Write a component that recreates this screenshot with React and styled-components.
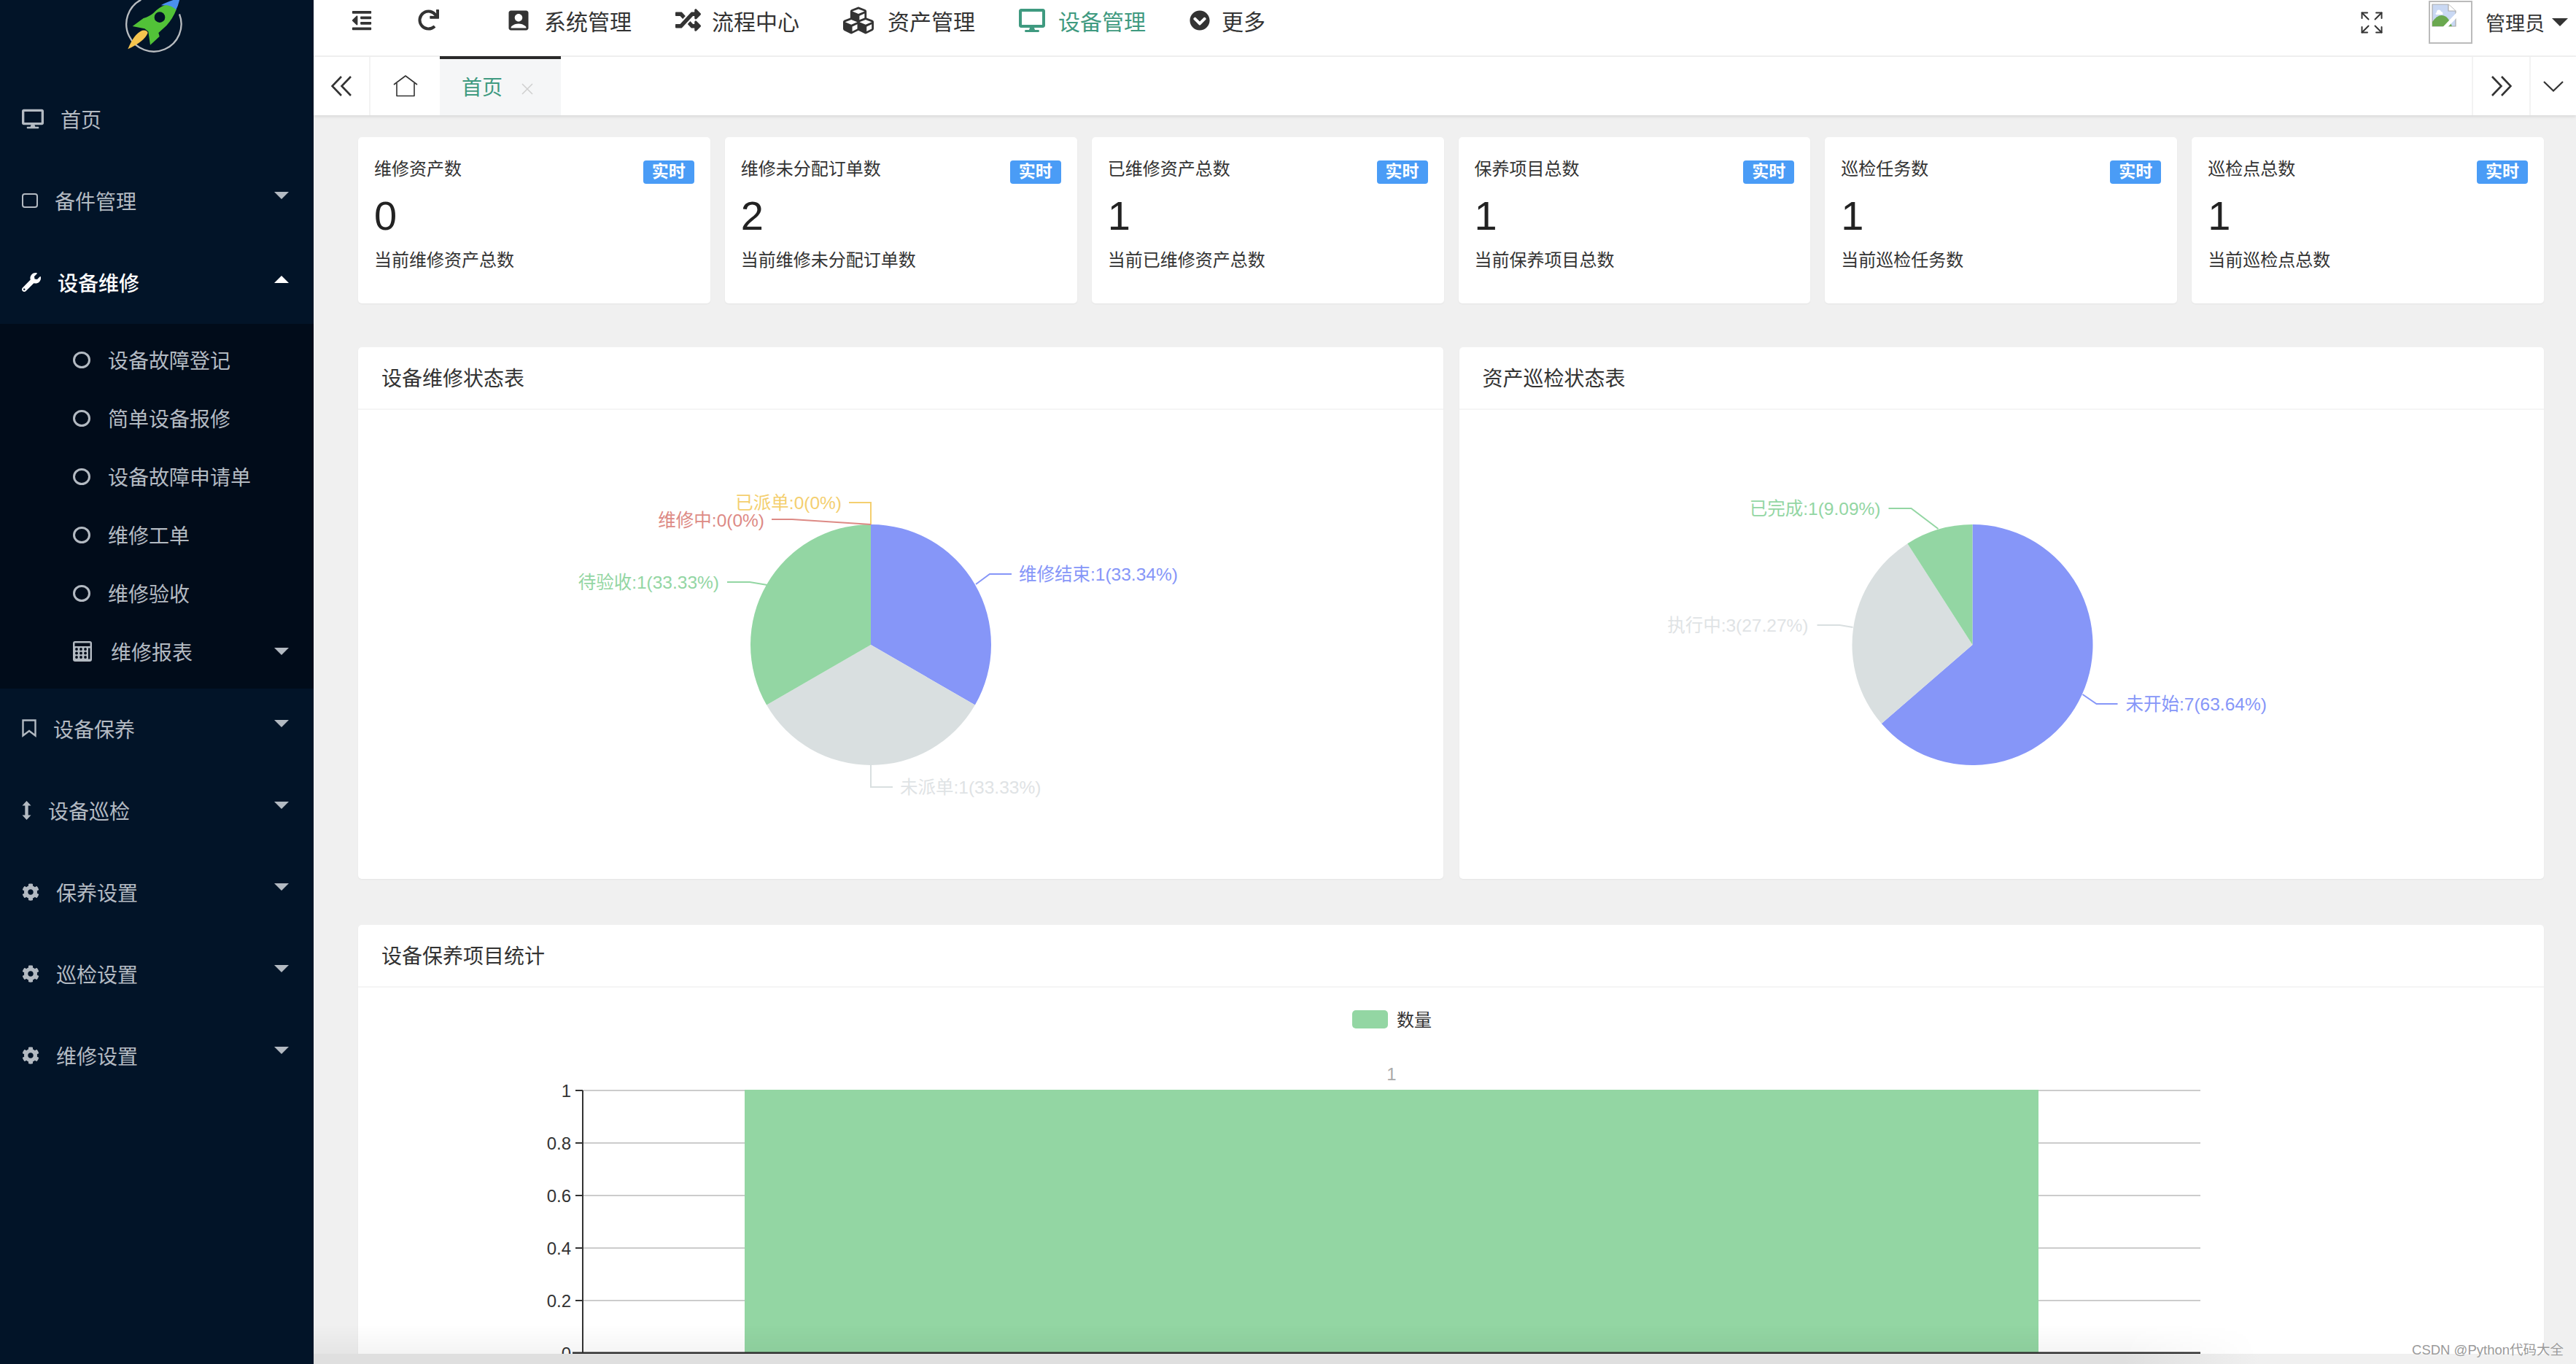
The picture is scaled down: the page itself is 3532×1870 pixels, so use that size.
import React from "react";
import styled, { createGlobalStyle } from "styled-components";
import {
  FaDesktop,
  FaWrench,
  FaCog,
  FaOutdent,
  FaRedo,
  FaRandom,
  FaCubes,
  FaChevronCircleDown,
} from "react-icons/fa";
import { MdAccountBox } from "react-icons/md";
import { Expand } from "lucide-react";

const GREEN = "#3f9a80";
const PIE_BLUE = "#8696f8";
const PIE_GRAY = "#d9dfe0";
const PIE_GREEN = "#93d6a3";
const PIE_RED = "#dd8a85";
const PIE_YELLOW = "#f4cf6f";

const GlobalStyle = createGlobalStyle`
  html, body {
    margin: 0;
    padding: 0;
    background: #f0f0f0;
  }
  body {
    font-family: "Liberation Sans", "Noto Sans CJK SC", sans-serif;
    color: #333;
  }
`;

const Page = styled.div`
  position: relative;
  display: flex;
  width: 3532px;
  height: 1870px;
  overflow: hidden;
`;

/* sidebar */
const Sidebar = styled.aside`
  flex: 0 0 430px;
  background: #021428;
  color: #b3bac2;
`;

const LogoBox = styled.div`
  height: 108px;
  padding-left: 130px;
  box-sizing: border-box;
  svg {
    display: block;
    width: 150px;
    height: 80px;
  }
`;

const NavRow = styled.div`
  position: relative;
  display: flex;
  align-items: center;
  gap: 23px;
  box-sizing: border-box;
  height: 112px;
  padding: 0 0 3px 30px;
  font-size: 28px;
  color: ${(p) => (p.$active ? "#fff" : "#b3bac2")};
  font-weight: ${(p) => (p.$active ? 500 : 400)};
`;

const SubMenu = styled.div`
  padding: 10px 0;
  background: #010c1a;
`;

const SubRow = styled.div`
  position: relative;
  display: flex;
  align-items: center;
  gap: ${(p) => p.$gap || 24}px;
  box-sizing: border-box;
  height: 80px;
  padding: 0 0 2px 100px;
  font-size: 28px;
`;

const IconBox = styled.span`
  display: inline-flex;
  flex: 0 0 auto;
  width: ${(p) => p.$w}px;
  color: ${(p) => p.$color || "inherit"};
  svg {
    display: block;
    width: 100%;
    height: auto;
  }
`;

const SquareIcon = styled.span`
  flex: 0 0 auto;
  width: 22px;
  height: 20px;
  border: 2.5px solid currentColor;
  border-radius: 4px;
  box-sizing: border-box;
`;

const RingIcon = styled.span`
  flex: 0 0 auto;
  width: 24px;
  height: 23px;
  border: 3.5px solid currentColor;
  border-radius: 50%;
  box-sizing: border-box;
`;

const Caret = styled.span`
  position: absolute;
  right: 34px;
  top: ${(p) => p.$top}px;
  width: 0;
  height: 0;
  border-left: 10px solid transparent;
  border-right: 10px solid transparent;
  ${(p) =>
    p.$up
      ? "border-bottom: 10px solid currentColor;"
      : "border-top: 10px solid currentColor;"}
`;

/* main column */
const Main = styled.main`
  flex: 1;
  min-width: 0;
  display: flex;
  flex-direction: column;
`;

const Header = styled.header`
  display: flex;
  align-items: center;
  flex: 0 0 78px;
  box-sizing: border-box;
  height: 78px;
  padding: 0 11px 21px 51px;
  background: #fff;
  border-bottom: 2px solid #f1f1f1;
`;

const ToolIcon = styled.span`
  display: inline-flex;
  width: ${(p) => p.$w}px;
  margin-right: ${(p) => p.$mr}px;
  color: #333;
  svg {
    display: block;
    width: 100%;
    height: auto;
  }
`;

const MenuItem = styled.div`
  display: flex;
  align-items: center;
  gap: ${(p) => p.$gap}px;
  margin-right: 60px;
  font-size: 30px;
  color: ${(p) => (p.$active ? GREEN : "#333")};
`;

const HeaderRight = styled.div`
  display: flex;
  align-items: center;
  margin-left: auto;
  margin-top: 6px;
`;

const Avatar = styled.div`
  width: 60px;
  height: 59px;
  margin: 0 18px 0 60px;
  padding: 2px;
  box-sizing: border-box;
  border: 2px solid #bbb;
  svg {
    display: block;
    width: 34px;
    height: 32px;
  }
`;

const UserName = styled.span`
  font-size: 27px;
  color: #333;
  margin-right: 10px;
`;

const UserCaret = styled.span`
  width: 0;
  height: 0;
  border-left: 11px solid transparent;
  border-right: 11px solid transparent;
  border-top: 11px solid #333;
`;

const TabBar = styled.div`
  position: relative;
  display: flex;
  flex: 0 0 80px;
  height: 80px;
  background: #fff;
  box-shadow: 0 2px 4px rgba(0, 0, 0, 0.1);
`;

const TabCell = styled.div`
  display: flex;
  align-items: center;
  justify-content: center;
  box-sizing: border-box;
  width: ${(p) => p.$w}px;
  color: #333;
  ${(p) => p.$right && "border-right: 2px solid #f3f3f3;"}
  ${(p) => p.$left && "border-left: 2px solid #f3f3f3;"}
`;

const Tab = styled.div`
  display: flex;
  align-items: center;
  gap: 26px;
  box-sizing: border-box;
  width: 166px;
  padding: 0 0 4px 30px;
  margin-top: -1px;
  background: #f5f6f7;
  border-top: 4px solid #2a2a2a;
  font-size: 28px;
  color: ${GREEN};
`;

const TabClose = styled.span`
  display: inline-flex;
  color: #cfcfcf;
  margin-top: 8px;
`;

const TabSpacer = styled.div`
  flex: 1;
`;

const Content = styled.div`
  flex: 1;
  min-height: 0;
  padding: 30px 44px 0 61px;
`;

const CardRow = styled.div`
  display: grid;
  grid-template-columns: repeat(6, 1fr);
  gap: 20px;
  margin-bottom: 60px;
`;

const StatCard = styled.div`
  position: relative;
  height: 228px;
  box-sizing: border-box;
  padding: 30px 22px 0 22px;
  background: #fff;
  border-radius: 5px;
  box-shadow: 0 1px 2px rgba(0, 0, 0, 0.05);
`;

const StatHead = styled.div`
  display: flex;
  align-items: flex-start;
  justify-content: space-between;
`;

const StatTitle = styled.div`
  font-size: 24px;
  line-height: 28px;
  color: #333;
`;

const Badge = styled.span`
  width: 70px;
  height: 32px;
  line-height: 31px;
  margin-top: 2px;
  text-align: center;
  background: #4a9cf6;
  border-radius: 4px;
  color: #fff;
  font-size: 23px;
  font-weight: 700;
`;

const StatValue = styled.div`
  margin-top: 12px;
  font-size: 56px;
  line-height: 64px;
  color: #222;
`;

const StatNote = styled.div`
  margin-top: 15px;
  font-size: 24px;
  line-height: 28px;
  color: #333;
`;

const PanelRow = styled.div`
  display: grid;
  grid-template-columns: 1fr 1fr;
  gap: 22px;
  margin-bottom: 63px;
`;

const Panel = styled.section`
  background: #fff;
  border-radius: 5px;
  box-shadow: 0 1px 2px rgba(0, 0, 0, 0.05);
`;

const PanelTitle = styled.div`
  height: 84px;
  line-height: 88px;
  padding-left: 32px;
  font-size: 28px;
  color: #333;
  border-bottom: 2px solid #f5f5f5;
`;

const ChartSvg = styled.svg`
  display: block;
  text {
    font-size: ${(p) => p.$font}px;
    dominant-baseline: central;
  }
`;

const BottomShade = styled.div`
  position: absolute;
  left: 430px;
  right: 0;
  bottom: 14px;
  height: 40px;
  background: linear-gradient(to bottom, rgba(0, 0, 0, 0), rgba(0, 0, 0, 0.045));
  -webkit-mask-image: linear-gradient(to right, #000 80%, transparent 86%);
  mask-image: linear-gradient(to right, #000 80%, transparent 86%);
`;

const BottomStrip = styled.div`
  position: absolute;
  left: 430px;
  right: 0;
  bottom: 0;
  height: 14px;
  background: linear-gradient(to right, #dfdfdf 80%, #f0f0f0 86%);
`;

const Watermark = styled.div`
  position: absolute;
  right: 17px;
  bottom: 7px;
  font-size: 18.5px;
  line-height: 24px;
  color: #9a9a9a;
  text-shadow: 0 0 2px #fff;
`;

const polar = (cx, cy, r, deg) => {
  const a = ((deg - 90) * Math.PI) / 180;
  return [cx + r * Math.cos(a), cy + r * Math.sin(a)];
};

const slicePath = (cx, cy, r, from, to) => {
  const [x1, y1] = polar(cx, cy, r, from);
  const [x2, y2] = polar(cx, cy, r, to);
  const large = to - from > 180 ? 1 : 0;
  return `M${cx} ${cy}L${x1} ${y1}A${r} ${r} 0 ${large} 1 ${x2} ${y2}Z`;
};

const repairPie = {
  x: 491,
  cx: 1194,
  slices: [
    [0, 120.02, PIE_BLUE],
    [120.02, 240, PIE_GRAY],
    [240, 360, PIE_GREEN],
  ],
  labels: [
    { text: "已派单:0(0%)", x: 1154, y: 689, anchor: "end", color: PIE_YELLOW, line: "1164,689 1194,689 1194,719" },
    { text: "维修中:0(0%)", x: 1048, y: 713, anchor: "end", color: PIE_RED, line: "1058,712 1086,712 1194,719" },
    { text: "待验收:1(33.33%)", x: 986, y: 798, anchor: "end", color: PIE_GREEN, line: "997,798 1028,798 1052,802" },
    { text: "维修结束:1(33.34%)", x: 1397, y: 787, anchor: "start", color: PIE_BLUE, line: "1387,787 1357,787 1338,801" },
    { text: "未派单:1(33.33%)", x: 1234, y: 1079, anchor: "start", color: "#dfe3e5", stroke: PIE_GRAY, line: "1194,1049 1194,1079 1224,1079" },
  ],
};

const patrolPie = {
  x: 2000.5,
  cx: 2704,
  slices: [
    [0, 229.1, PIE_BLUE],
    [229.1, 327.3, PIE_GRAY],
    [327.3, 360, PIE_GREEN],
  ],
  labels: [
    { text: "已完成:1(9.09%)", x: 2578, y: 697, anchor: "end", color: PIE_GREEN, line: "2589,697 2620,697 2657,725" },
    { text: "执行中:3(27.27%)", x: 2479, y: 857, anchor: "end", color: "#dfe3e5", stroke: PIE_GRAY, line: "2491,857 2522,857 2540,860" },
    { text: "未开始:7(63.64%)", x: 2914, y: 965, anchor: "start", color: PIE_BLUE, line: "2903,965 2874,965 2855,952" },
  ],
};

const PieChart = ({ data }) => (
  <ChartSvg $font={24.5} width="1487" height="643" viewBox={`${data.x} 562 1487 643`}>
    {data.slices.map(([from, to, color]) => (
      <path key={from} d={slicePath(data.cx, 884, 165, from, to)} fill={color} />
    ))}
    {data.labels.map((l) => (
      <g key={l.text}>
        <polyline points={l.line} fill="none" stroke={l.stroke || l.color} strokeWidth="2" />
        <text x={l.x} y={l.y} textAnchor={l.anchor} fill={l.color}>
          {l.text}
        </text>
      </g>
    ))}
  </ChartSvg>
);

const ticks = [
  ["1", 1495],
  ["0.8", 1567],
  ["0.6", 1639],
  ["0.4", 1711],
  ["0.2", 1783],
  ["0", 1855],
];

const BarChart = () => (
  <ChartSvg $font={24} width="2997" height="520" viewBox="491 1354 2997 520">
    <rect x="1854" y="1385" width="49" height="25" rx="5" fill={PIE_GREEN} />
    <text x="1915" y="1398" fill="#333">数量</text>
    {ticks.map(([label, y]) => (
      <g key={label}>
        <line x1="799" x2="3017" y1={y} y2={y} stroke="#ccc" strokeWidth="2" />
        <line x1="789" x2="799" y1={y} y2={y} stroke="#333" strokeWidth="2" />
        <text x="783" y={y} textAnchor="end" fill="#333">{label}</text>
      </g>
    ))}
    <rect x="1021" y="1494" width="1774" height="361" fill={PIE_GREEN} />
    <text x="1908" y="1472" textAnchor="middle" fill="#aaa">1</text>
    <line x1="799" x2="799" y1="1495" y2="1856" stroke="#333" strokeWidth="2" />
    <line x1="785" x2="3017" y1="1855" y2="1855" stroke="#333" strokeWidth="3" />
  </ChartSvg>
);

const Logo = () => (
  <svg viewBox="0 0 450 240">
    <path d="M348 58A113 113 0 1 1 190 -1" fill="none" stroke="#b8bcc0" strokeWidth="7" />
    <path d="M272 22Q300 5 350 -8Q345 20 332 45Q300 20 272 22Z" fill="#4a90ee" />
    <path d="M155 108L200 75Q225 68 240 55Q262 30 290 21Q315 22 335 40Q322 75 295 105L262 135L266 150L228 185L220 130L205 118Z" fill="#52c238" />
    <circle cx="267" cy="71" r="22" fill="#021428" />
    <path d="M136 202Q160 140 195 125Q215 122 218 135Q205 170 136 202Z" fill="#f5c44f" />
  </svg>
);

const HomeIcon = () => (
  <svg width="34" height="30" viewBox="0 0 34 30" fill="none" stroke="#333" strokeWidth="1.6" strokeLinejoin="round">
    <path d="M1 13L17 1L33 13" />
    <path d="M5 11V28.5H29V11" />
  </svg>
);

const BrokenImage = () => (
  <svg viewBox="0 0 34 32">
    <path d="M1 1H23L33 10V31H1Z" fill="#c9d8f3" stroke="#aaa" strokeWidth="1.2" />
    <path d="M23 1V10H33" fill="#fff" stroke="#aaa" strokeWidth="1.2" />
    <path d="M7 12a3 3 0 0 1 6-1a2.500 2.500 0 0 1 2 4H6a2 2 0 0 1 1-3Z" fill="#fff" />
    <path d="M1 31V25Q10 12 20 18Q24 21 28 31Z" fill="#6aa84f" />
    <path d="M17 34L36 14" stroke="#fff" strokeWidth="5" />
  </svg>
);

const BookmarkIcon = () => (
  <svg width="20" height="25" viewBox="0 0 20 25" fill="none" stroke="currentColor" strokeWidth="2.4">
    <path d="M1.500 1.500H18.500V22.500L10 16L1.500 22.500Z" />
  </svg>
);

const UpDownIcon = () => (
  <svg width="13" height="26" viewBox="0 0 13 26" fill="currentColor">
    <path d="M6.500 0L12.500 6.500H8.700V19.500H12.500L6.500 26L0.500 19.500H4.300V6.500H0.500Z" />
  </svg>
);

const CalculatorIcon = () => (
  <svg width="26" height="28" viewBox="0 0 26 28">
    <rect width="26" height="28" rx="3" fill="currentColor" />
    <rect x="2.500" y="2.500" width="21" height="4.500" fill="#010c1a" />
    {[11, 16.5, 22].map((y) =>
      [5, 11, 17].map((x) => <circle key={`${x}-${y}`} cx={x} cy={y} r="1.900" fill="#010c1a" />)
    )}
    <rect x="21" y="9.500" width="2.500" height="15" fill="#010c1a" />
  </svg>
);

const ChevronsIcon = ({ flip }) => (
  <svg width="28" height="28" viewBox="0 0 28 28" fill="none" stroke="#333" strokeWidth="2.600" transform={flip ? "scale(-1 1)" : undefined}>
    <path d="M14 1L1.500 14L14 27" />
    <path d="M27 1L14.500 14L27 27" />
  </svg>
);

const ChevronIcon = () => (
  <svg width="28" height="15" viewBox="0 0 28 15" fill="none" stroke="#333" strokeWidth="2.200">
    <path d="M1 1L14 13.500L27 1" />
  </svg>
);

const navTop = [
  { label: "首页", icon: <IconBox $w={30}><FaDesktop /></IconBox> },
  { label: "备件管理", icon: <SquareIcon />, caret: true },
];

const navBottom = [
  { label: "设备保养", icon: <IconBox $w={20}><BookmarkIcon /></IconBox> },
  { label: "设备巡检", icon: <IconBox $w={13}><UpDownIcon /></IconBox> },
  { label: "保养设置", icon: <IconBox $w={24}><FaCog /></IconBox> },
  { label: "巡检设置", icon: <IconBox $w={24}><FaCog /></IconBox> },
  { label: "维修设置", icon: <IconBox $w={24}><FaCog /></IconBox> },
];

const subItems = ["设备故障登记", "简单设备报修", "设备故障申请单", "维修工单", "维修验收"];

const menuItems = [
  { label: "系统管理", w: 36, gap: 17, icon: <MdAccountBox /> },
  { label: "流程中心", w: 35, gap: 15, icon: <FaRandom /> },
  { label: "资产管理", w: 42, gap: 19, icon: <FaCubes /> },
  { label: "设备管理", w: 36, gap: 18, icon: <FaDesktop />, active: true },
  { label: "更多", w: 28, gap: 16, icon: <FaChevronCircleDown /> },
];

const stats = [
  { title: "维修资产数", value: 0, note: "当前维修资产总数" },
  { title: "维修未分配订单数", value: 2, note: "当前维修未分配订单数" },
  { title: "已维修资产总数", value: 1, note: "当前已维修资产总数" },
  { title: "保养项目总数", value: 1, note: "当前保养项目总数" },
  { title: "巡检任务数", value: 1, note: "当前巡检任务数" },
  { title: "巡检点总数", value: 1, note: "当前巡检点总数" },
];

const App = () => {
  return (
    <Page>
      <GlobalStyle />
      <Sidebar>
        <LogoBox>
          <Logo />
        </LogoBox>
        {navTop.map((item) => (
          <NavRow key={item.label}>
            {item.icon}
            {item.label}
            {item.caret && <Caret $top={43} />}
          </NavRow>
        ))}
        <NavRow $active>
          <IconBox $w={26}><FaWrench /></IconBox>
          设备维修
          <Caret $up $top={46} />
        </NavRow>
        <SubMenu>
          {subItems.map((label) => (
            <SubRow key={label}>
              <RingIcon />
              {label}
            </SubRow>
          ))}
          <SubRow $gap={26}>
            <IconBox $w={26}><CalculatorIcon /></IconBox>
            维修报表
            <Caret $top={34} />
          </SubRow>
        </SubMenu>
        {navBottom.map((item) => (
          <NavRow key={item.label}>
            {item.icon}
            {item.label}
            <Caret $top={43} />
          </NavRow>
        ))}
      </Sidebar>
      <Main>
        <Header>
          <ToolIcon $w={30} $mr={62}><FaOutdent /></ToolIcon>
          <ToolIcon $w={29} $mr={91}><FaRedo /></ToolIcon>
          {menuItems.map((m) => (
            <MenuItem key={m.label} $gap={m.gap} $active={m.active}>
              <IconBox $w={m.w}>{m.icon}</IconBox>
              {m.label}
            </MenuItem>
          ))}
          <HeaderRight>
            <Expand size={36} strokeWidth={1.3} color="#333" />
            <Avatar>
              <BrokenImage />
            </Avatar>
            <UserName>管理员</UserName>
            <UserCaret />
          </HeaderRight>
        </Header>
        <TabBar>
          <TabCell $w={78} $right><ChevronsIcon /></TabCell>
          <TabCell $w={95}><HomeIcon /></TabCell>
          <Tab>
            首页
            <TabClose>
              <svg width="16" height="16" viewBox="0 0 16 16" stroke="currentColor" strokeWidth="1.5">
                <path d="M1 1L15 15M15 1L1 15" />
              </svg>
            </TabClose>
          </Tab>
          <TabSpacer />
          <TabCell $w={79} $left><ChevronsIcon flip /></TabCell>
          <TabCell $w={64} $left><ChevronIcon /></TabCell>
        </TabBar>
        <Content>
          <CardRow>
            {stats.map((s) => (
              <StatCard key={s.title}>
                <StatHead>
                  <StatTitle>{s.title}</StatTitle>
                  <Badge>实时</Badge>
                </StatHead>
                <StatValue>{s.value}</StatValue>
                <StatNote>{s.note}</StatNote>
              </StatCard>
            ))}
          </CardRow>
          <PanelRow>
            <Panel>
              <PanelTitle>设备维修状态表</PanelTitle>
              <PieChart data={repairPie} />
            </Panel>
            <Panel>
              <PanelTitle>资产巡检状态表</PanelTitle>
              <PieChart data={patrolPie} />
            </Panel>
          </PanelRow>
          <Panel>
            <PanelTitle>设备保养项目统计</PanelTitle>
            <BarChart />
          </Panel>
        </Content>
      </Main>
      <BottomShade />
      <BottomStrip />
      <Watermark>CSDN @Python代码大全</Watermark>
    </Page>
  );
};

export default App;
